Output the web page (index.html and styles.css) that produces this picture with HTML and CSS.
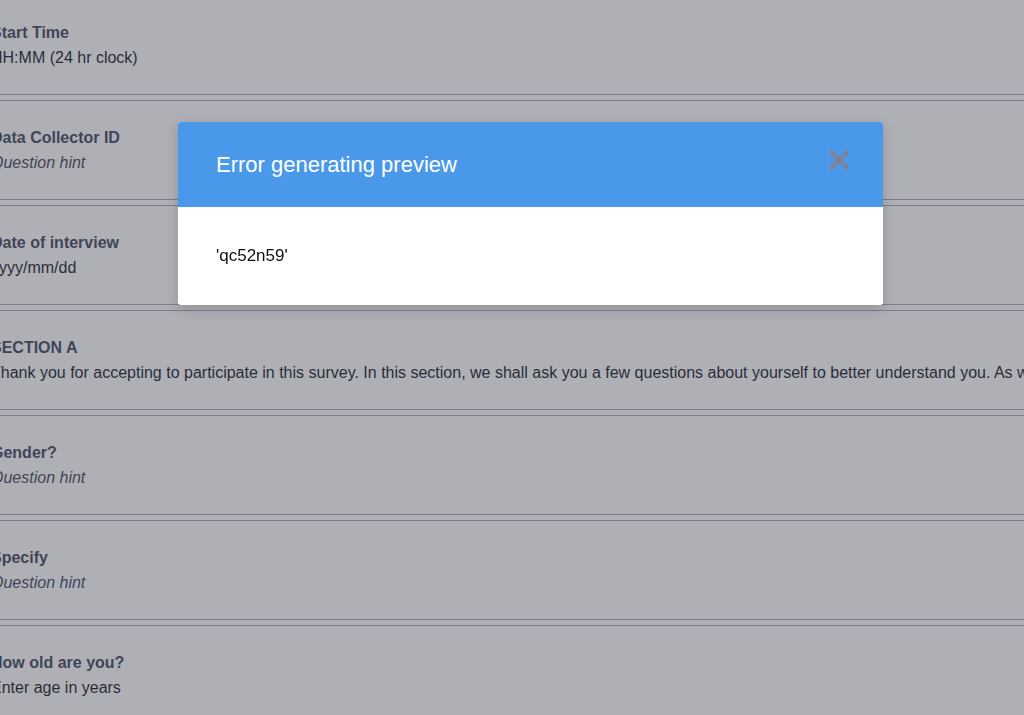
FILE: index.html
```html
<!DOCTYPE html>
<html>
<head>
<meta charset="utf-8">
<link rel="stylesheet" href="styles.css">
</head>
<body>
<div class="page">
  <div class="row"><div class="label">Start Time</div><div class="value">HH:MM (24 hr clock)</div></div>
  <div class="row"><div class="label">Data Collector ID</div><div class="hint">Question hint</div></div>
  <div class="row"><div class="label">Date of interview</div><div class="value">yyyy/mm/dd</div></div>
  <div class="row"><div class="label">SECTION A</div><div class="value">Thank you for accepting to participate in this survey. In this section, we shall ask you a few questions about yourself to better understand you. As we proceed, please feel free to ask any questions.</div></div>
  <div class="row"><div class="label">Gender?</div><div class="hint">Question hint</div></div>
  <div class="row"><div class="label">Specify</div><div class="hint">Question hint</div></div>
  <div class="row"><div class="label">How old are you?</div><div class="value">Enter age in years</div></div>
  <div class="row"><div class="label">Marital status</div><div class="hint">Question hint</div></div>
</div>
<div class="overlay">
  <div class="modal">
    <div class="modal-head">
      <div class="modal-title">Error generating preview</div>
      <svg class="close" width="22" height="22" viewBox="0 0 22 22"><path d="M2 2 L20 20 M20 2 L2 20" stroke="#7f8396" stroke-width="4" fill="none"/></svg>
    </div>
    <div class="modal-body">'qc52n59'</div>
  </div>
</div>
</body>
</html>
```
FILE: styles.css
```css
html, body {
  margin: 0;
  padding: 0;
  overflow: hidden;
  height: 715px;
}
body {
  font-family: "Liberation Sans", Arial, sans-serif;
  background: #ffffff;
}
.page {
  margin-top: -5px;
  margin-left: -9px;
  width: 1400px;
}
.row {
  border-top: 1px solid #9da3be;
  border-bottom: 1px solid #9da3be;
  padding: 26px 0 25px 0;
  margin-bottom: 5px;
  height: 47px;
  box-sizing: content-box;
}
.label {
  font-size: 16px;
  font-weight: bold;
  line-height: 22px;
  color: #333b56;
  white-space: nowrap;
}
.value, .hint {
  font-size: 16px;
  line-height: 22px;
  margin-top: 3px;
  color: #060c1c;
  white-space: nowrap;
}
.hint {
  font-style: italic;
  color: #333b56;
}
.overlay {
  position: fixed;
  inset: 0;
  background: rgba(77, 79, 90, 0.45);
}
.modal {
  position: absolute;
  left: 178px;
  top: 122px;
  width: 705px;
  background: #fff;
  border-radius: 3px;
  box-shadow: 0 4px 14px rgba(0, 0, 0, 0.18);
  overflow: hidden;
}
.modal-head {
  height: 85px;
  background: #4a98ea;
  display: flex;
  align-items: center;
  justify-content: space-between;
  padding: 0 33px 0 38px;
}
.modal-title {
  color: #fff;
  font-size: 22px;
  margin-top: 1px;
}
.close {
  margin-top: -10px;
}
.modal-body {
  height: 98px;
  display: flex;
  align-items: center;
  padding: 0 38px;
  font-size: 17px;
  color: #111;
}
```
